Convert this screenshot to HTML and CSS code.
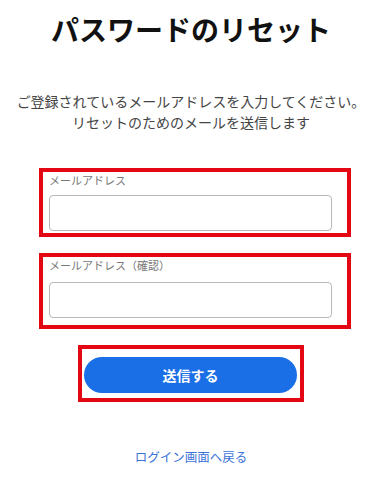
FILE: index.html
```html
<!DOCTYPE html>
<html lang="ja">
<head>
<meta charset="utf-8">
<link rel="stylesheet" href="styles.css">
</head>
<body>
<main class="page">
  <h1 class="title">パスワードのリセット</h1>
  <p class="lead">ご登録されているメールアドレスを入力してください。<br>リセットのためのメールを送信します</p>
  <div class="mark field field-1">
    <label class="label">メールアドレス</label>
    <input class="input" type="email">
  </div>
  <div class="mark field field-2">
    <label class="label">メールアドレス（確認）</label>
    <input class="input" type="email">
  </div>
  <div class="mark submit-wrap">
    <button class="submit" type="button">送信する</button>
  </div>
  <a class="back" href="#">ログイン画面へ戻る</a>
</main>
</body>
</html>
```
FILE: styles.css
```css
html, body {
  margin: 0;
  padding: 0;
  background: #fff;
}
body {
  font-family: "Noto Sans CJK JP", "Noto Sans", sans-serif;
  color: #333;
}
.page {
  width: 384px;
  display: flex;
  flex-direction: column;
}
.title {
  margin: 11px 0 0 -2px;
  font-size: 28px;
  line-height: 36px;
  font-weight: 700;
  color: #111;
  text-align: center;
}
.lead {
  margin: 44px 0 0 -2px;
  font-size: 14px;
  line-height: 21px;
  color: #444;
  text-align: center;
}
.mark {
  border: 4px solid #e30613;
  box-sizing: border-box;
}
.field {
  margin-left: 39px;
  width: 312px;
  display: flex;
  flex-direction: column;
  padding-left: 6px;
  padding-top: 1px;
}
.field-1 {
  margin-top: 35px;
  height: 69px;
}
.field-2 {
  margin-top: 16px;
  height: 76px;
}
.label {
  font-size: 11px;
  line-height: 15px;
  color: #777;
}
.input {
  margin-top: 7px;
  width: 283px;
  height: 36px;
  box-sizing: border-box;
  border: 1px solid #b8b8b8;
  border-radius: 4px;
  background: #fff;
  padding: 0 8px;
  font: inherit;
}
.field-2 .input {
  margin-top: 9px;
}
.submit-wrap {
  margin: 16px 0 0 78px;
  width: 226px;
  height: 57px;
  padding: 8px 0 0 2px;
}
.submit {
  display: block;
  width: 213px;
  height: 36px;
  border: none;
  border-radius: 18px;
  background: #1a6ee6;
  color: #fff;
  font-family: inherit;
  font-size: 14px;
  font-weight: 700;
  line-height: 36px;
  padding: 0;
}
.back {
  margin: 46px 0 0 -2px;
  align-self: center;
  font-size: 12.5px;
  line-height: 18px;
  color: #3a72d8;
  text-decoration: none;
}
```
